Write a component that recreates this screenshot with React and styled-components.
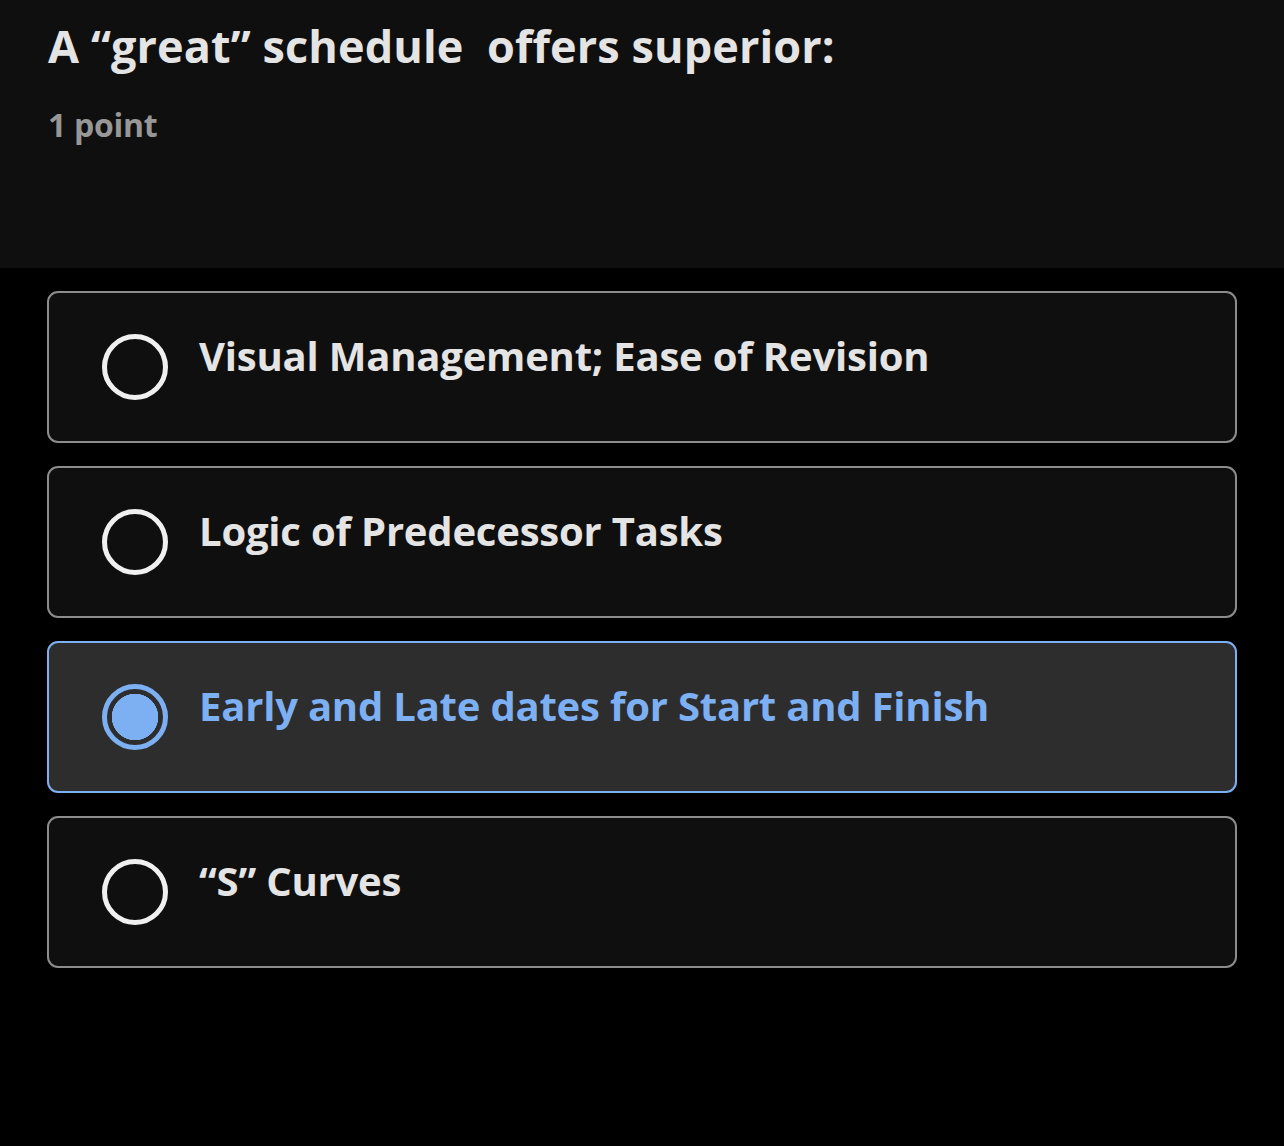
import React from "react";
import styled, { createGlobalStyle } from "styled-components";

const GlobalStyle = createGlobalStyle`
  html, body {
    margin: 0;
    padding: 0;
    background: #000;
  }
  body {
    font-family: "Open Sans", "Noto Sans", sans-serif;
    -webkit-font-smoothing: antialiased;
  }
`;

const options = [
  "Visual Management; Ease of Revision",
  "Logic of Predecessor Tasks",
  "Early and Late dates for Start and Finish",
  "\u201cS\u201d Curves",
];

const App = () => {
  const selected = 2;
  return (
    <Page>
      <GlobalStyle />
      <Header>
        <Title>A “great” schedule&nbsp; offers superior:</Title>
        <Points>1 point</Points>
      </Header>
      <List>
        {options.map((text, i) => (
          <Option key={i} $active={i === selected}>
            <Radio $active={i === selected} />
            <Label $active={i === selected}>{text}</Label>
          </Option>
        ))}
      </List>
    </Page>
  );
};

const Page = styled.div`
  width: 1284px;
  min-height: 1146px;
  background: #000;
`;

const Header = styled.div`
  background: #0f0f0f;
  height: 268px;
  box-sizing: border-box;
  padding: 16px 48px 0;
`;

const Title = styled.h1`
  margin: 0;
  font-size: 45px;
  font-weight: 700;
  color: #e4e4e4;
  letter-spacing: 0.1px;
  line-height: 60px;
`;

const Points = styled.div`
  margin-top: 27px;
  font-size: 32px;
  font-weight: 700;
  color: #979797;
  letter-spacing: -0.3px;
`;

const List = styled.div`
  display: flex;
  flex-direction: column;
  gap: 23px;
  padding: 23px 47px 0;
`;

const Option = styled.div`
  height: 152px;
  box-sizing: border-box;
  border: 2px solid ${(p) => (p.$active ? "#7db0f2" : "#8c8c8c")};
  border-radius: 11px;
  background: ${(p) => (p.$active ? "#2d2d2d" : "#0f0f0f")};
  display: flex;
  align-items: flex-start;
  padding: 41px 0 0 53px;
`;

const Radio = styled.span`
  flex: none;
  width: 66px;
  height: 66px;
  box-sizing: border-box;
  border-radius: 50%;
  border: 5px solid ${(p) => (p.$active ? "#7db0f2" : "#f0f0f0")};
  background: ${(p) =>
    p.$active ? "radial-gradient(circle, #7db0f2 0 23px, transparent 23.5px)" : "transparent"};
`;

const Label = styled.span`
  margin-left: 31px;
  margin-top: -6px;
  font-size: 40px;
  font-weight: 700;
  letter-spacing: -0.2px;
  line-height: 56px;
  color: ${(p) => (p.$active ? "#7db0f2" : "#e4e4e4")};
`;

export default App;
